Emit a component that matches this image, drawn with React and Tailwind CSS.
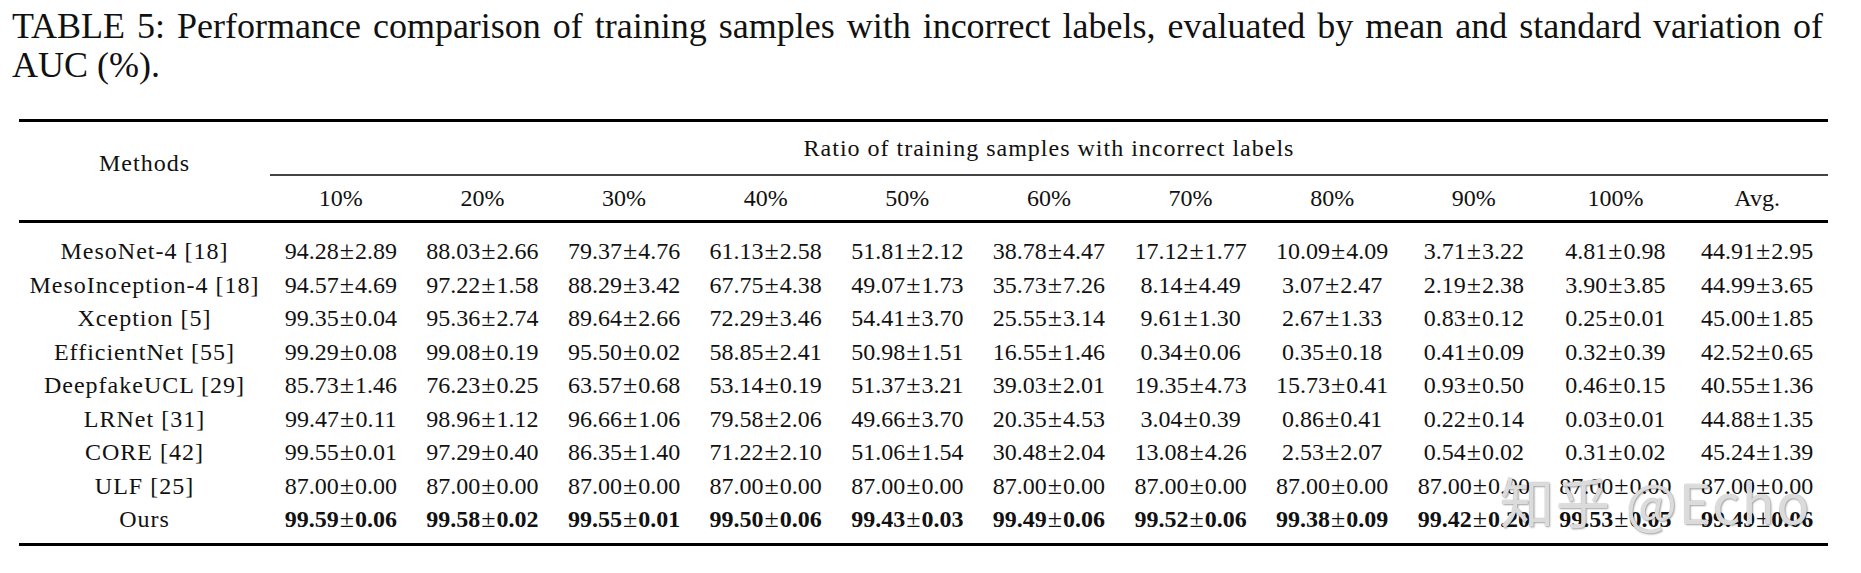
import React from "react";

const columns = ["10%", "20%", "30%", "40%", "50%", "60%", "70%", "80%", "90%", "100%", "Avg."];

const rows = [
  { name: "MesoNet-4 [18]", values: ["94.28±2.89", "88.03±2.66", "79.37±4.76", "61.13±2.58", "51.81±2.12", "38.78±4.47", "17.12±1.77", "10.09±4.09", "3.71±3.22", "4.81±0.98", "44.91±2.95"] },
  { name: "MesoInception-4 [18]", values: ["94.57±4.69", "97.22±1.58", "88.29±3.42", "67.75±4.38", "49.07±1.73", "35.73±7.26", "8.14±4.49", "3.07±2.47", "2.19±2.38", "3.90±3.85", "44.99±3.65"] },
  { name: "Xception [5]", values: ["99.35±0.04", "95.36±2.74", "89.64±2.66", "72.29±3.46", "54.41±3.70", "25.55±3.14", "9.61±1.30", "2.67±1.33", "0.83±0.12", "0.25±0.01", "45.00±1.85"] },
  { name: "EfficientNet [55]", values: ["99.29±0.08", "99.08±0.19", "95.50±0.02", "58.85±2.41", "50.98±1.51", "16.55±1.46", "0.34±0.06", "0.35±0.18", "0.41±0.09", "0.32±0.39", "42.52±0.65"] },
  { name: "DeepfakeUCL [29]", values: ["85.73±1.46", "76.23±0.25", "63.57±0.68", "53.14±0.19", "51.37±3.21", "39.03±2.01", "19.35±4.73", "15.73±0.41", "0.93±0.50", "0.46±0.15", "40.55±1.36"] },
  { name: "LRNet [31]", values: ["99.47±0.11", "98.96±1.12", "96.66±1.06", "79.58±2.06", "49.66±3.70", "20.35±4.53", "3.04±0.39", "0.86±0.41", "0.22±0.14", "0.03±0.01", "44.88±1.35"] },
  { name: "CORE [42]", values: ["99.55±0.01", "97.29±0.40", "86.35±1.40", "71.22±2.10", "51.06±1.54", "30.48±2.04", "13.08±4.26", "2.53±2.07", "0.54±0.02", "0.31±0.02", "45.24±1.39"] },
  { name: "ULF [25]", values: ["87.00±0.00", "87.00±0.00", "87.00±0.00", "87.00±0.00", "87.00±0.00", "87.00±0.00", "87.00±0.00", "87.00±0.00", "87.00±0.00", "87.00±0.00", "87.00±0.00"] },
  { name: "Ours", bold: true, values: ["99.59±0.06", "99.58±0.02", "99.55±0.01", "99.50±0.06", "99.43±0.03", "99.49±0.06", "99.52±0.06", "99.38±0.09", "99.42±0.20", "99.53±0.05", "99.49±0.06"] },
];

const Value = ({ v }) => {
  const [mean, std] = v.split("±");
  return (
    <>
      {mean}
      <span className="mx-[1px] text-[26px] leading-none font-normal">±</span>
      {std}
    </>
  );
};

const App = () => {
  return (
    <div className="relative w-[1861px] h-[573px] bg-white text-[#111] font-['Liberation_Serif','Times_New_Roman',serif]">
      {/* caption */}
      <p className="pl-[12px] pt-[7px] w-[1823px] text-[36px] leading-[39px] text-justify">
        TABLE 5: Performance comparison of training samples with incorrect labels, evaluated by mean and standard variation of AUC (%).
      </p>

      <div className="ml-[19px] mt-[34px] w-[1809px] border-t-[3px] border-b-[3px] border-black">
        <table className="w-full table-fixed border-collapse text-[24px]">
          <colgroup>
            <col className="w-[251px]" />
            {columns.map((c) => (
              <col key={c} />
            ))}
          </colgroup>
          <thead className="border-b-[3px] border-black">
            <tr className="h-[53px]">
              <th rowSpan={2} className="pb-4 font-normal tracking-[1px]">
                Methods
              </th>
              <th colSpan={11} className="border-b-2 border-[#444] font-normal tracking-[1px]">
                Ratio of training samples with incorrect labels
              </th>
            </tr>
            <tr className="h-[46px]">
              {columns.map((c) => (
                <th key={c} className="font-normal">
                  {c}
                </th>
              ))}
            </tr>
          </thead>
          <tbody>
            <tr className="h-[14px]">
              <td colSpan={12}></td>
            </tr>
            {rows.map((row) => (
              <tr key={row.name} className="h-[33.5px] leading-[33.5px]">
                <td className="text-center whitespace-nowrap tracking-[1px]">{row.name}</td>
                {row.values.map((v, i) => (
                  <td key={i} className={"text-center whitespace-nowrap " + (row.bold ? "font-bold" : "")}>
                    <Value v={v} />
                  </td>
                ))}
              </tr>
            ))}
            <tr className="h-[6px]">
              <td colSpan={12}></td>
            </tr>
          </tbody>
        </table>
      </div>

      {/* watermark */}
      <div
        aria-hidden="true"
        className="absolute left-[1500px] top-[474px] text-[54px] leading-none tracking-[2px] text-white/70 select-none pointer-events-none font-['Noto_Sans_CJK_SC','Noto_Sans',sans-serif] [text-shadow:0_0_1px_#888,1px_1px_2px_rgba(0,0,0,0.35)]"
      >
        知乎 @Echo
      </div>
    </div>
  );
};

export default App;
